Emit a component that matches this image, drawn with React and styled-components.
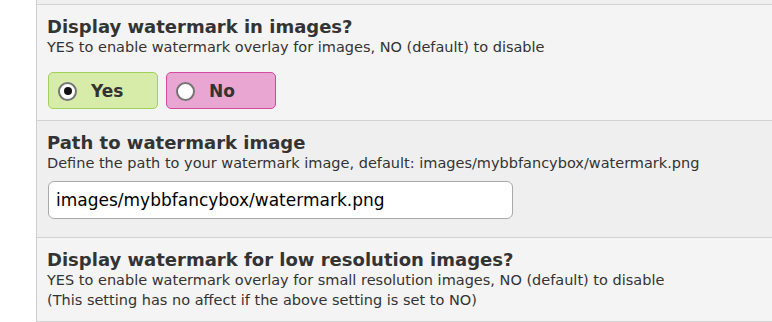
import React, { useState } from 'react'
import styled, { createGlobalStyle } from 'styled-components'

const GlobalStyle = createGlobalStyle`
  html, body {
    margin: 0;
    padding: 0;
    background: #fff;
  }
  body {
    font-family: "DejaVu Sans", Verdana, sans-serif;
    color: #333;
  }
`

export default function App() {
  const [watermark, setWatermark] = useState(true)
  const [path, setPath] = useState(`images/mybbfancybox/watermark.png`)

  return (
    <Page>
      <GlobalStyle />
      <Gutter />
      <Settings>
        <TopStrip />
        <Row>
          <Title>Display watermark in images?</Title>
          <Description>
            YES to enable watermark overlay for images, NO (default) to disable
          </Description>
          <Choices>
            <Choice tone='yes' onClick={() => setWatermark(true)}>
              <Radio checked={watermark} />
              Yes
            </Choice>
            <Choice tone='no' onClick={() => setWatermark(false)}>
              <Radio checked={!watermark} />
              No
            </Choice>
          </Choices>
        </Row>
        <Row alt>
          <Title>Path to watermark image</Title>
          <Description>
            Define the path to your watermark image, default:
            images/mybbfancybox/watermark.png
          </Description>
          <TextInput
            value={path}
            onChange={({ target: { value } }) => setPath(value)}
          />
        </Row>
        <Row>
          <Title>Display watermark for low resolution images?</Title>
          <Description>
            YES to enable watermark overlay for small resolution images, NO
            (default) to disable
            <br />
            (This setting has no affect if the above setting is set to NO)
          </Description>
        </Row>
      </Settings>
    </Page>
  )
}

const Page = styled.div`
  display: flex;
  width: 772px;
  height: 322px;
  overflow: hidden;
`

const Gutter = styled.div`
  width: 36px;
  flex-shrink: 0;
  background: #fff;
  border-right: 1px solid #cfcfcf;
`

const Settings = styled.div`
  flex: 1;
  display: flex;
  flex-direction: column;
`

const TopStrip = styled.div`
  height: 6px;
  background: #efefef;
  border-bottom: 1px solid #d3d3d3;
`

const Row = styled.div`
  padding: 12px 10px 11px 10px;
  background: ${({ alt }) => (alt ? `#efefef` : `#f4f4f4`)};
  border-bottom: 1px solid #d3d3d3;
  white-space: nowrap;
`

const Title = styled.div`
  font-size: 18px;
  font-weight: bold;
  line-height: 20px;
  color: #333;
`

const Description = styled.div`
  font-size: 14.5px;
  line-height: 20px;
  color: #333;
`

const Choices = styled.div`
  display: flex;
  gap: 8px;
  margin: 15px 0 0 1px;
`

const toneColors = {
  yes: { bg: `#d8eca9`, border: `#a2d05c` },
  no: { bg: `#eaa6d2`, border: `#d24b9c` },
}

const Choice = styled.label`
  display: flex;
  align-items: center;
  gap: 14px;
  box-sizing: border-box;
  width: 110px;
  height: 37px;
  padding: 1px 0 0 9px;
  border-radius: 5px;
  background: ${({ tone }) => toneColors[tone].bg};
  border: 1px solid ${({ tone }) => toneColors[tone].border};
  font-size: 17px;
  font-weight: bold;
  color: #333;
  cursor: pointer;
`

const Radio = styled.span`
  position: relative;
  box-sizing: border-box;
  width: 19px;
  height: 19px;
  border-radius: 50%;
  border: 2px solid #757575;
  background: #fff;
  &::after {
    content: '';
    display: ${({ checked }) => (checked ? `block` : `none`)};
    position: absolute;
    left: 50%;
    top: 50%;
    width: 8px;
    height: 8px;
    margin: -4px 0 0 -4px;
    border-radius: 50%;
    background: #111;
  }
`

const TextInput = styled.input`
  display: block;
  box-sizing: border-box;
  width: 465px;
  height: 38px;
  margin: 8px 0 7px 1px;
  padding: 0 7px;
  border: 1px solid #a9a9a9;
  border-radius: 6px;
  background: #fff;
  font-family: "DejaVu Sans", Verdana, sans-serif;
  font-size: 17px;
  color: #000;
  outline: none;
`
